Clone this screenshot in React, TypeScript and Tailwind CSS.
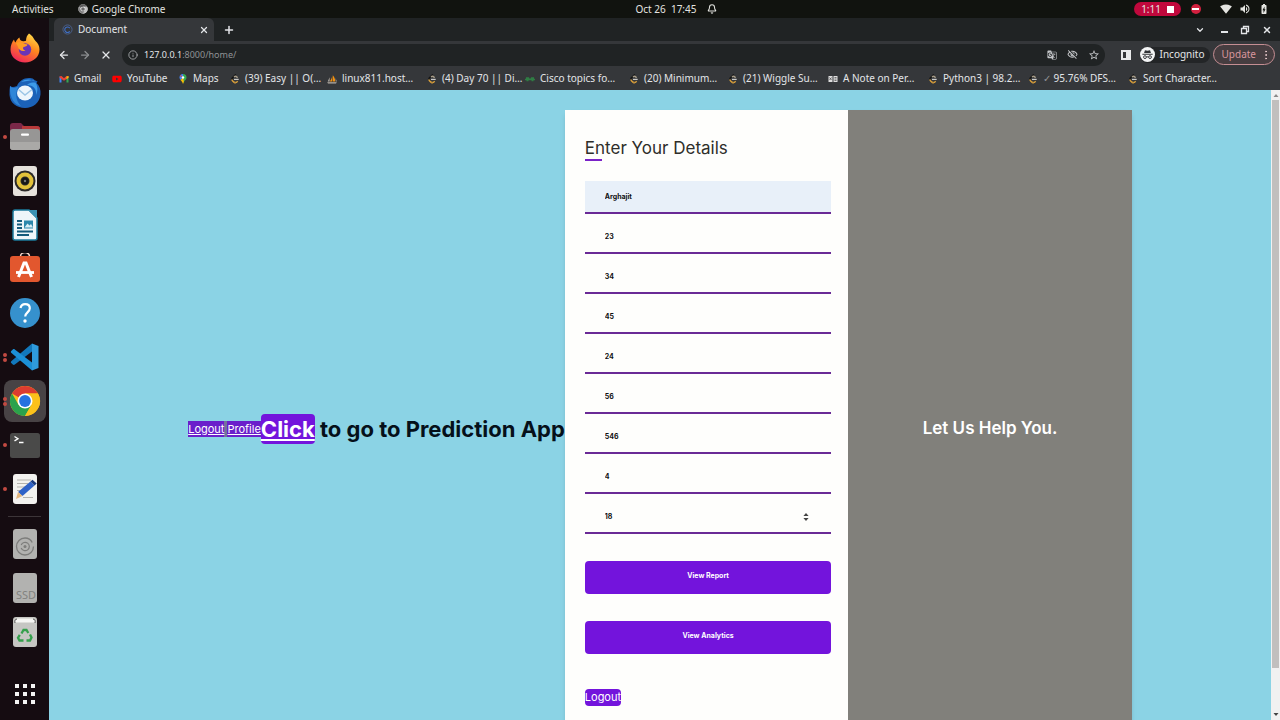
import type { ReactNode } from "react";
import { FaYoutube } from "react-icons/fa";
import {
  MdBatteryChargingFull,
  MdGTranslate,
  MdOutlineVisibilityOff,
  MdSignalWifi4Bar,
  MdStarBorder,
  MdVolumeUp,
} from "react-icons/md";
import {
  ArrowLeft,
  ArrowRight,
  Bell,
  ChevronDown,
  EllipsisVertical,
  Info,
  Plus,
  X,
} from "lucide-react";

const FIELDS = [
  { label: "Name", value: "Arghajit" },
  { label: "Age", value: "23" },
  { label: "Nitrogen", value: "34" },
  { label: "Phosphorus", value: "45" },
  { label: "Potassium", value: "24" },
  { label: "Temperature", value: "56" },
  { label: "Humidity", value: "546" },
  { label: "pH", value: "4" },
  { label: "Rainfall", value: "18" },
];

function Leet() {
  return (
    <svg viewBox="0 0 10 10" className="size-[10px] shrink-0" fill="none" strokeWidth="1.4">
      <path d="M5.800.4 2 4.200v1.200" stroke="#141414" />
      <path d="M4 2.900c1-.9 2-.7 2.800 0l.8.8" stroke="#a79c88" />
      <path d="M2 5.400c0 .8.300 1.300.900 1.900 1.700 1.900 3 1.700 4.800-.1" stroke="#dba03a" />
      <path d="M4 5.400h4.700" stroke="#c9c9c9" strokeWidth="1.200" />
      <path d="M5 7.800v1.800" stroke="#b98b3c" strokeWidth="1.600" />
    </svg>
  );
}

function Gmail() {
  return (
    <svg viewBox="0 0 10 10" className="size-[10px] shrink-0">
      <path d="M.5 2.5v6h2V4.6z" fill="#4285f4" />
      <path d="M9.500 2.500v6h-2V4.600z" fill="#34a853" />
      <path d="M.5 2.2 2.5 2 5 4.200 7.500 2l2 .2v1.300L5 6.800.5 3.500z" fill="#ea4335" />
      <path d="M7.500 2.500 9.500 2v1.800l-2 1.400z" fill="#fbbc04" />
    </svg>
  );
}

function MapsPin() {
  return (
    <svg viewBox="0 0 10 10" className="size-[10px] shrink-0">
      <path d="M5 0a3.500 3.500 0 0 1 3.500 3.500C8.500 6 5.700 7 5 10z" fill="#34a853" />
      <path d="M5 0a3.500 3.500 0 0 0-3.500 3.500c0 1 .4 1.800 1 2.500L5 3.500z" fill="#4285f4" />
      <path d="M2.500 6C3.500 7.200 4.600 8 5 10L5.900 7.400 5 3.500z" fill="#fbbc04" />
      <path d="M1.800 2 5 3.500 2.700.9z" fill="#ea4335" />
      <circle cx="5" cy="3.500" r="1.200" fill="#fff" />
    </svg>
  );
}

function Sails() {
  return (
    <svg viewBox="0 0 10 10" className="size-[10px] shrink-0">
      <path d="M5.400.6v7H2.800C4.500 5.400 5.200 3.200 5.400.6zM6 1.600c1.400 1.700 2.200 3.800 2.400 6H6z" fill="#f29111" />
      <path d="M2.600 3.200v4.400H.8zM8.600 4l1.200 3.600H8.900zM.2 8.200h9.600L9 9.400H1z" fill="#b8b0a6" />
    </svg>
  );
}

function GreenMark() {
  return (
    <svg viewBox="0 0 10 10" className="size-[10px] shrink-0" fill="none" stroke="#2f7d44" strokeWidth="1.300">
      <path d="M1 4h2.500l1 1.500M9 4H6.500l-1 1.500M0 5.500h10M1.500 6.700h2M6.500 6.700h2" />
    </svg>
  );
}

function BookMark() {
  return (
    <svg viewBox="0 0 10 10" className="size-[10px] shrink-0">
      <path d="M.5 2h4v6h-4zM5.500 2h4v6h-4z" fill="#dedede" />
      <path d="M1.500 3.500 3.500 6M1.500 6l2-2.500M6.500 3.500h2M6.500 5h2M6.500 6.500h2" stroke="#444" strokeWidth=".7" />
    </svg>
  );
}

const BOOKMARKS: { title: ReactNode; icon: ReactNode; width: string }[] = [
  { title: "Gmail", icon: <Gmail />, width: "w-[53px]" },
  { title: "YouTube", icon: <FaYoutube className="size-[10px] shrink-0 text-[#f00]" />, width: "w-[66px]" },
  { title: "Maps", icon: <MapsPin />, width: "w-[52px]" },
  { title: "(39) Easy || O(…", icon: <Leet />, width: "w-[97px]" },
  { title: "linux811.host…", icon: <Sails />, width: "w-[100px]" },
  { title: "(4) Day 70 || Di…", icon: <Leet />, width: "w-[98px]" },
  { title: "Cisco topics fo…", icon: <GreenMark />, width: "w-[104px]" },
  { title: "(20) Minimum…", icon: <Leet />, width: "w-[99px]" },
  { title: "(21) Wiggle Su…", icon: <Leet />, width: "w-[100px]" },
  { title: "A Note on Per…", icon: <BookMark />, width: "w-[100px]" },
  { title: "Python3 | 98.2…", icon: <Leet />, width: "w-[100px]" },
  {
    title: (
      <span>
        <span className="text-[#8f9295]">✓</span> 95.76% DFS…
      </span>
    ),
    icon: <Leet />,
    width: "w-[100px]",
  },
  { title: "Sort Character…", icon: <Leet />, width: "w-[100px]" },
];

function ChromeLogo({ className }: { className: string }) {
  return (
    <svg viewBox="0 0 32 32" className={className}>
      <circle cx="16" cy="16" r="15" fill="#fbc11b" />
      <path d="M16 16 3 8.500A15 15 0 0 1 29 8.500H16z" fill="#dc3c30" />
      <path d="M3 8.500A15 15 0 0 0 16 31l6.500-11.200L16 16 9.500 19.800z" fill="#2ba24c" />
      <path d="M16 8.500h13A15 15 0 0 1 16 31l6.500-11.200z" fill="#fbc11b" />
      <circle cx="16" cy="16" r="7.500" fill="#fff" />
      <circle cx="16" cy="16" r="5.900" fill="#2672e0" />
    </svg>
  );
}

const DOCK: { name: string; dots: number; active?: boolean; icon: ReactNode }[] = [
  {
    name: "Firefox",
    dots: 0,
    icon: (
      <>
        <defs>
          <linearGradient id="fx" x1="0.800" y1="0" x2="0.300" y2="1">
            <stop offset="0" stopColor="#ffe14d" />
            <stop offset="0.450" stopColor="#ff8a1e" />
            <stop offset="1" stopColor="#f0245c" />
          </linearGradient>
        </defs>
        <path d="M20 .500c4 2.500 4.500 5 6.500 7.500 2.500 2 4 5 4 8.500C30.500 24 24 29.500 16 29.500S1.500 24 1.500 16.500c0-4 1.500-7.500 3.500-10 .3 1.500.8 2.200 1.500 3C7.500 7 9 5.500 10.500 4.500c0 1.500.8 3 2.500 3.500 2 .3 3 .2 4-.3.200-3 1-5.500 3-7.200z" fill="url(#fx)" />
        <circle cx="16" cy="16.500" r="6.200" fill="#6a35b8" />
        <path d="M7 10c3-2 6-1 8 .5 1.500 1 3 .7 3.500 1-.5 2-2.500 2-4 2.500-1 1-.5 3 2 3.800-4 1-7-.8-7.500-4z" fill="#ff9d22" />
      </>
    ),
  },
  {
    name: "Thunderbird",
    dots: 0,
    icon: (
      <>
        <path d="M1 9c2 1.500 4 1 7 0C10 4 15 .500 21 1c2 .2 3.500.800 4.500 2l3 1.500-1 1.500c3 3 4.500 6.500 4 11.500C30.500 26 24 31 16 31S1 26 .500 18c0-3 0-6 .5-9z" fill="#1b62b8" />
        <path d="M12 5c5-4 12-3 15 1-4-1-7 0-9 2 6 0 10 4 9 10 3-6 1-12-3-15" fill="#3d9be8" />
        <path d="M1 9c2 3 6 2 9 0-4 6-4 14 2 20C6 28 0 21 1 9z" fill="#2f86d8" />
        <ellipse cx="16" cy="16" rx="8" ry="7.500" fill="#edf6fc" />
        <path d="m9.500 12.500 6.500 5.500 7-5.500" fill="none" stroke="#9cc6e6" strokeWidth="1.500" />
      </>
    ),
  },
  {
    name: "Files",
    dots: 1,
    icon: (
      <>
        <path d="M1 5a3 3 0 0 1 3-3h8l3 3h13a3 3 0 0 1 3 3v6H1z" fill="#7a2848" />
        <path d="M13 5h15a3 3 0 0 1 3 3v2H13z" fill="#b83a3a" />
        <rect x="1" y="8" width="30" height="21" rx="3" fill="#979695" />
        <path d="M1 21h30v5a3 3 0 0 1-3 3H4a3 3 0 0 1-3-3z" fill="#aaa9a7" />
        <rect x="12" y="12.500" width="8" height="2.200" rx="1" fill="#fff" />
      </>
    ),
  },
  {
    name: "Rhythmbox",
    dots: 0,
    icon: (
      <>
        <rect x="4" y="1" width="24" height="30" rx="3" fill="#e6e2dc" />
        <circle cx="16" cy="16" r="10.500" fill="#2c2a28" />
        <circle cx="16" cy="16" r="6.500" fill="none" stroke="#e3c23a" strokeWidth="4" />
        <circle cx="16" cy="16" r="3.500" fill="#171717" />
        <circle cx="16" cy="16" r="1.200" fill="#777" />
      </>
    ),
  },
  {
    name: "LibreOffice Writer",
    dots: 0,
    icon: (
      <>
        <path d="M6 1h14l8 8v20a2 2 0 0 1-2 2H6a2 2 0 0 1-2-2V3a2 2 0 0 1 2-2z" fill="#eef6f9" stroke="#1b7b9c" strokeWidth="1.500" />
        <path d="M19 1h9v9z" fill="#3b93b4" />
        <path d="M8 12h5M8 15.500h5M8 19h5M8 22.500h16M8 26h12" stroke="#145c7c" strokeWidth="1.800" />
        <path d="M15 11.500h9v8h-9z" fill="#2c88ac" />
        <path d="m15.500 18.500 3-4 2 2 1.500-1.500 2 3.500z" fill="#d7eef6" />
      </>
    ),
  },
  {
    name: "Ubuntu Software",
    dots: 0,
    icon: (
      <>
        <path d="M11.500 5V3.500a4.500 4 0 0 1 9 0V5" fill="none" stroke="#f5d7c9" strokeWidth="1.500" />
        <rect x="1" y="3" width="30" height="26" rx="3" fill="#e2572e" />
        <path d="M9.500 24 15 10h2l5.500 14" fill="none" stroke="#fff" strokeWidth="3" />
        <path d="M7 19.500h18" stroke="#fff" strokeWidth="2.800" />
      </>
    ),
  },
  {
    name: "Help",
    dots: 0,
    icon: (
      <>
        <circle cx="16" cy="16" r="15" fill="#3691cd" />
        <path d="M11.500 11c.5-2.500 2.300-3.800 4.600-3.800 2.800 0 4.700 1.700 4.700 4.100 0 4-4.600 4.200-4.600 8.200" fill="none" stroke="#fff" strokeWidth="2.200" />
        <circle cx="16" cy="24" r="1.700" fill="#fff" />
      </>
    ),
  },
  {
    name: "Visual Studio Code",
    dots: 2,
    icon: (
      <>
        <path d="M23 2.500 29.500 5v22L23 29.500z" fill="#2f9bdc" />
        <path d="M23 2.500 2.500 20c-1 .9-.8 1.600 0 2.300l1.300 1.200c.7.6 1.400.5 2 .1L23 10.500z" fill="#1278bb" />
        <path d="M23 29.500 2.500 12c-1-.9-.8-1.600 0-2.300l1.300-1.200c.7-.6 1.400-.5 2-.1L23 21.500z" fill="#1c90d6" />
      </>
    ),
  },
  { name: "Google Chrome", dots: 2, active: true, icon: <ChromeLogo className="size-8" /> },
  {
    name: "Terminal",
    dots: 1,
    icon: (
      <>
        <rect x="1" y="4" width="30" height="25" rx="2.500" fill="#4a4a49" />
        <path d="m5.500 7.500 3.500 2.200-3.500 2.200M10 13.500h4.500" fill="none" stroke="#fff" strokeWidth="1.300" />
      </>
    ),
  },
  {
    name: "Text Editor",
    dots: 1,
    icon: (
      <>
        <rect x="4" y="1" width="24" height="30" rx="3" fill="#f3f2ef" />
        <path d="M8 7h14M8 10.500h11M8 14h9M8 17.500h6M14 24.500h10" stroke="#b5b3ad" strokeWidth="1" />
        <path d="m21.500 8.500 4 4L13.500 23l-4.500-4z" fill="#2f62c7" />
        <path d="m21.500 8.500 2-1.800 4.200 3.800-2.200 2z" fill="#1a3c80" />
        <path d="m9 19 4.500 4-6.500 3z" fill="#e4b77e" />
      </>
    ),
  },
];

const DRIVES: { name: string; icon: ReactNode }[] = [
  {
    name: "Disk",
    icon: (
      <>
        <rect x="4" y="1" width="24" height="30" rx="3" fill="#b2b2b0" />
        <path d="M24.500 18.500A8.500 8.500 0 1 1 16 10c3.500 0 6 2 7.200 4.500" fill="none" stroke="#7d7d7b" strokeWidth="1.300" />
        <path d="M12.200 17a4.200 4.200 0 1 1 0 3" fill="none" stroke="#7d7d7b" strokeWidth="1.200" />
        <circle cx="16" cy="18.500" r="1.500" fill="#7d7d7b" />
      </>
    ),
  },
  {
    name: "SSD volume",
    icon: (
      <>
        <rect x="4" y="1" width="24" height="30" rx="3" fill="#b2b2b0" />
        <text x="7" y="27" fontSize="11" fill="#82827f" fontFamily="Noto Sans, sans-serif">
          SSD
        </text>
      </>
    ),
  },
  {
    name: "Trash",
    icon: (
      <>
        <rect x="4" y="1" width="24" height="30" rx="3" fill="#c6c6c3" />
        <path d="M7 2.500h18l1.500 4h-21z" fill="#f6f6f4" />
        <path d="M6 7c-.5-2 0-4 2-4M26 7c.5-2 0-4-2-4" fill="none" stroke="#555" strokeWidth="1" />
        <path d="m12.500 17.500 2-3.500h3l1.800 3M21 18.500l1.500 3-1.500 3h-3.500M14.500 24.500h-4L9 21.800l1.800-3" fill="none" stroke="#35a04c" strokeWidth="2.300" />
      </>
    ),
  },
];

function DockButton({ name, dots = 0, active = false, icon }: { name: string; dots?: number; active?: boolean; icon: ReactNode }) {
  return (
    <button
      aria-label={name}
      className="relative flex h-11 w-full shrink-0 items-center justify-center"
    >
      <span
        className={
          active
            ? "flex size-[42px] items-center justify-center rounded-lg bg-[#484345]"
            : "flex items-center justify-center"
        }
      >
        <svg viewBox="0 0 32 32" className="size-8">
          {icon}
        </svg>
      </span>
      <span className="absolute inset-y-0 left-[3px] flex flex-col items-center justify-center gap-px">
        {dots > 0 && <i className="size-1 rounded-full bg-[#c24a42]" />}
        {dots > 1 && <i className="size-1 rounded-full bg-[#c24a42]" />}
      </span>
    </button>
  );
}

function TopBar() {
  return (
    <header className="grid h-[18px] shrink-0 grid-cols-3 items-center bg-[#11130f] text-[10px] text-[#e4e4e0]">
      <div className="flex items-center gap-6 pl-3">
        <button>Activities</button>
        <button className="flex items-center gap-1">
          <ChromeLogo className="size-[10px] grayscale" />
          Google Chrome
        </button>
      </div>
      <button className="flex items-center justify-center gap-[10px] pl-18">
        <span className="whitespace-pre">Oct 26  17:45</span>
        <Bell className="size-[10px]" strokeWidth={2.5} />
      </button>
      <div className="flex items-center justify-end pr-[10px]">
        <button className="flex h-[14px] items-center gap-[6px] rounded-full bg-[#c0083c] px-[7px]">
          1:11
          <i className="size-[7px] bg-white" />
        </button>
        <span className="ml-[10px] flex size-[10px] items-center justify-center rounded-full bg-[#d2203f]">
          <i className="h-[2px] w-[7px] bg-white" />
        </span>
        <MdSignalWifi4Bar className="ml-[19px] size-3" />
        <MdVolumeUp className="ml-[7px] size-3" />
        <MdBatteryChargingFull className="ml-[7px] size-3" />
      </div>
    </header>
  );
}

function Dock() {
  return (
    <nav className="flex w-[49px] shrink-0 flex-col bg-[#150c11] pt-[9px] pb-1">
      {DOCK.map((item) => (
        <DockButton key={item.name} {...item} />
      ))}
      <hr className="mx-2 my-[5px] border-[#3c3538]" />
      {DRIVES.map((item) => (
        <DockButton key={item.name} {...item} />
      ))}
      <div className="mt-auto">
        <DockButton
          name="Show Applications"
          icon={
            <path
              d="M6 6h4v4H6zM14 6h4v4h-4zM22 6h4v4h-4zM6 14h4v4H6zM14 14h4v4h-4zM22 14h4v4h-4zM6 22h4v4H6zM14 22h4v4h-4zM22 22h4v4h-4z"
              fill="#f4f4f4"
            />
          }
        />
      </div>
    </nav>
  );
}

function BrowserChrome() {
  return (
    <div className="shrink-0 text-[10px] text-[#e3e5e8]">
      <div className="flex h-[23px] items-center bg-[#202324] pl-[5px]">
        <div className="flex h-full w-[160px] items-center rounded-t-md bg-[#35373a] pr-[5px] pl-2">
          <svg viewBox="0 0 12 12" className="size-[11px]" fill="none">
            <circle cx="6" cy="6" r="5" stroke="#4a6290" strokeWidth="1" />
            <path d="M8.500 8A3 3 0 1 1 8.500 4.500" stroke="#3f70c8" strokeWidth="1.200" />
          </svg>
          <span className="ml-[5px] flex-1">Document</span>
          <button aria-label="Close tab">
            <X className="size-[10px]" strokeWidth={3} />
          </button>
        </div>
        <button aria-label="New tab" className="ml-[9px]">
          <Plus className="size-3" strokeWidth={3} />
        </button>
        <div className="ml-auto flex items-center gap-3 pr-2">
          <button aria-label="Search tabs">
            <ChevronDown className="size-[10px]" strokeWidth={3} />
          </button>
          <button aria-label="Minimize" className="ml-1 pt-1">
            <i className="block h-[2px] w-[7px] bg-current" />
          </button>
          <button aria-label="Restore">
            <svg viewBox="0 0 10 10" className="size-[10px]" fill="none" stroke="currentColor" strokeWidth="1.300">
              <path d="M1.500 3.500h5v5h-5zM3.500 3V1.500h5v5H7" />
            </svg>
          </button>
          <button aria-label="Close window">
            <X className="size-[10px]" strokeWidth={3.5} />
          </button>
        </div>
      </div>
      <div className="flex h-[27px] items-center bg-[#35373a] pr-[5px] pl-[9px]">
        <button aria-label="Back">
          <ArrowLeft className="size-3" strokeWidth={2.5} />
        </button>
        <button aria-label="Forward" className="ml-[9px] text-[#8b8d90]">
          <ArrowRight className="size-3" strokeWidth={2.5} />
        </button>
        <button aria-label="Stop" className="ml-[9px]">
          <X className="size-3" strokeWidth={2.5} />
        </button>
        <div className="ml-[10px] flex h-[22px] flex-1 items-center rounded-full bg-[#202324] pr-[5px] pl-[6px]">
          <Info className="size-[10px] text-[#b0b2b5]" />
          <a href="#url" className="ml-[6px] flex-1 text-[9px] text-[#8f9295]">
            <span className="text-[#e3e5e8]">127.0.0.1</span>:8000/home/
          </a>
          <span className="flex items-center gap-[10px] text-[#c4c6c9]">
            <MdGTranslate className="size-[10px]" />
            <MdOutlineVisibilityOff className="size-[11px]" />
            <MdStarBorder className="size-3" />
          </span>
        </div>
        <button aria-label="Side panel" className="ml-4 flex size-[10px] justify-end border-2 border-[#e9eaeb]">
          <i className="h-full w-[3px] bg-[#e9eaeb]" />
        </button>
        <button className="ml-[9px] flex h-[16px] items-center gap-[5px] rounded-full bg-[#232527] pr-[5px]">
          <svg viewBox="0 0 16 16" className="size-[15px]">
            <circle cx="8" cy="8" r="8" fill="#f3f4f5" />
            <path d="M5.300 3.500 8 4l2.700-.5 1 3H4.300zM2.500 7.200h11v1h-11z" fill="#303236" />
            <path d="M6.800 10.800a1.500 1.500 0 1 1-3 0 1.500 1.500 0 0 1 3 0zM12.200 10.800a1.500 1.500 0 1 1-3 0 1.500 1.500 0 0 1 3 0zM6.800 10.500h2.400" fill="none" stroke="#303236" strokeWidth="1" />
          </svg>
          Incognito
        </button>
        <button className="ml-[3px] flex h-[21px] items-center gap-1 rounded-full border border-[#c58e93] bg-[#463d40] pr-[2px] pl-2 text-[#d9979d]">
          Update
          <EllipsisVertical className="size-3 text-[#e8c9cb]" />
        </button>
      </div>
      <nav className="flex h-[22px] items-center overflow-hidden bg-[#35373a] pb-px pl-[10px]">
        {BOOKMARKS.map(({ title, icon, width }, i) => (
          <a
            key={i}
            href="#bookmark"
            className={`${width} flex shrink-0 items-center gap-[5px] whitespace-nowrap`}
          >
            {icon}
            {title}
          </a>
        ))}
      </nav>
    </div>
  );
}

function DetailsForm() {
  return (
    <form className="w-1/2 bg-[#fefefc] pt-[27px] pr-[17px] pb-[41px] pl-5">
      <h2 className="text-[17px] leading-[22px] text-[#2e2e2a]">Enter Your Details</h2>
      <div className="mb-5 h-[2px] w-[17px] bg-[#7a22c8]" />
      <div className="flex flex-col gap-[7px]">
        {FIELDS.map(({ label, value }, i) => (
          <div key={label} className="relative">
            <input
              aria-label={label}
              defaultValue={value}
              className={
                i === 0
                  ? "block h-[33px] w-full border-b-2 border-[#6a2a96] bg-[#e8f0f9] px-5 text-[7px] font-bold text-[#111]"
                  : "block h-[33px] w-full border-b-2 border-[#6a2a96] px-5 text-[7px] font-bold text-[#111]"
              }
            />
            {i === FIELDS.length - 1 && (
              <svg viewBox="0 0 6 8" className="absolute top-3 right-[22px] h-2 w-[6px]" fill="#444">
                <path d="M3 0 5.600 3H.4zM3 8 .4 5h5.200z" />
              </svg>
            )}
          </div>
        ))}
      </div>
      {["View Report", "View Analytics"].map((text) => (
        <button
          key={text}
          type="button"
          className="mt-[27px] block h-[33px] w-full rounded bg-[#7314dc] pb-[2px] text-[7px] font-bold text-white"
        >
          {text}
        </button>
      ))}
      <a href="#logout" className="mt-[35px] inline-block rounded bg-[#7314dc] text-[11px] leading-[17px] text-white">
        Logout
      </a>
    </form>
  );
}

function HomePage() {
  return (
    <main className="min-w-0 flex-1 overflow-hidden bg-[#8bd3e5] py-5 font-['Inter',sans-serif]">
      <div className="flex items-center justify-center">
        <div className="flex gap-[3px] bg-[#74729c] text-[11px] leading-4 text-white">
          <a href="#logout" className="bg-[#6a1fcb] underline">
            Logout
          </a>
          <a href="#profile" className="bg-[#6a1fcb] underline">
            Profile
          </a>
        </div>
        <h1 className="text-[22px] leading-[30px] font-bold whitespace-nowrap text-[#05101a]">
          <a href="#predict" className="inline-block rounded bg-[#7314dc] text-white underline">
            Click
          </a>{" "}
          to go to Prediction App
        </h1>
        <section className="flex w-[567px] shrink-0 shadow-md">
          <DetailsForm />
          <div className="flex w-1/2 items-center justify-center bg-[#81807b]">
            <h2 className="text-[17px] font-semibold text-white">Let Us Help You.</h2>
          </div>
        </section>
      </div>
    </main>
  );
}

function Scrollbar() {
  return (
    <div className="flex w-[9px] shrink-0 flex-col items-center bg-[#f1f1f1]">
      <svg viewBox="0 0 6 4" className="mt-1 mb-[2px] h-1 w-[6px]" fill="#8a8a8a">
        <path d="m3 0 2.500 3h-5z" />
      </svg>
      <div className="w-[7px] flex-1 bg-[#c1bfbe]" />
      <svg viewBox="0 0 6 4" className="mt-11 mb-1 h-1 w-[6px]" fill="#444">
        <path d="M3 4 .5 1h5z" />
      </svg>
    </div>
  );
}

export default function App() {
  return (
    <div className="flex h-screen flex-col overflow-hidden font-['Noto_Sans',sans-serif]">
      <TopBar />
      <div className="flex min-h-0 flex-1">
        <Dock />
        <div className="flex min-w-0 flex-1 flex-col">
          <BrowserChrome />
          <div className="flex min-h-0 flex-1">
            <HomePage />
            <Scrollbar />
          </div>
        </div>
      </div>
    </div>
  );
}
